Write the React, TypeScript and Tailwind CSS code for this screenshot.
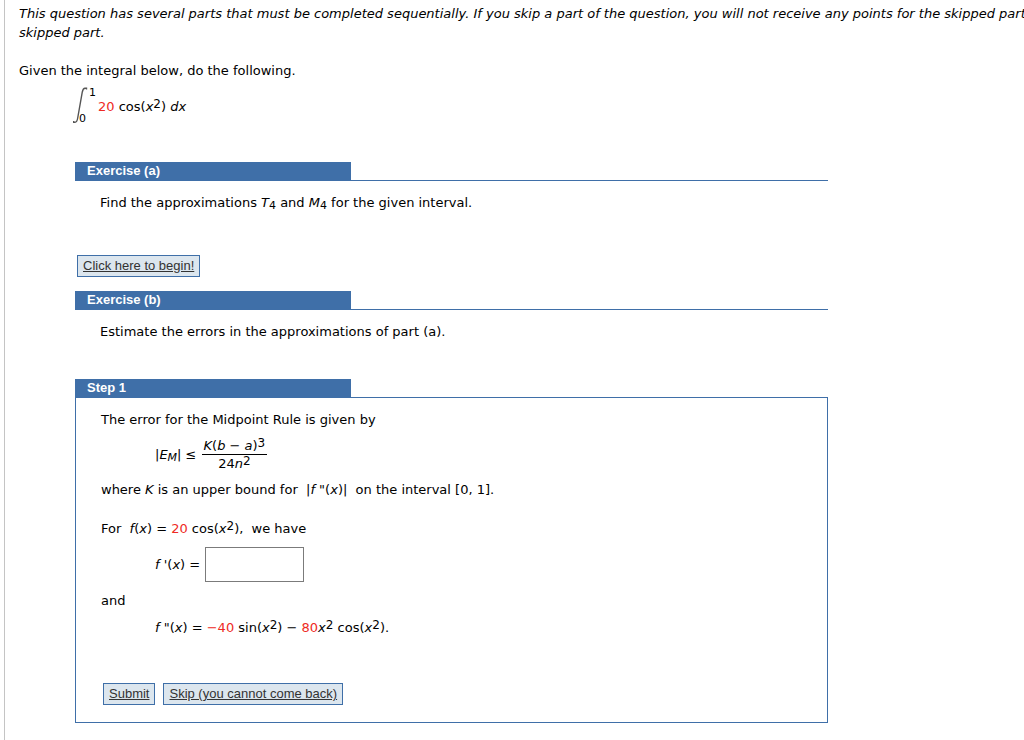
import type { ReactNode } from "react";

function SectionTitle({ children }: { children: ReactNode }) {
    return (
        <div className="border-b border-[#3f6fa8]">
            <h2 className="w-[276px] max-w-full h-[18px] pl-3 bg-[#3f6fa8] text-white font-['Liberation_Sans',sans-serif] font-bold text-[13px] leading-[18px]">{children}</h2>
        </div>
    )
}

function ActionButton({ children }: { children: ReactNode }) {
    return (
        <button type="button" className="h-[22px] px-[5px] border border-[#3f6fa8] bg-[#dce6ee] text-[#333] font-['Liberation_Sans',sans-serif] text-[13px] leading-5 underline cursor-pointer">{children}</button>
    )
}

function Sup({ children }: { children: ReactNode }) {
    return <sup className="text-[12px] leading-none align-[3px] top-0">{children}</sup>
}

function Sub({ children }: { children: ReactNode }) {
    return <sub className="text-[11px] leading-none align-[-2px] bottom-0">{children}</sub>
}

function Red({ children }: { children: ReactNode }) {
    return <span className="text-[#ee2a24]">{children}</span>
}

function Integral() {
    return (
        <div className="flex items-center pl-[54px] mt-[7px] h-[38px]">
            <svg width="16" height="38" viewBox="0 0 16 38" fill="none" stroke="#555" aria-hidden="true">
                <path d="M13.500 2.500V1.200H12C10.200 1.200 9.800 2.500 9.300 5L4.700 31C4.200 34 3.600 35.300 2 35.300H0.500V34" strokeWidth="1.400" />
            </svg>
            <div className="flex flex-col justify-between h-[38px] w-[9px] text-[11px] leading-3">
                <span>1</span>
                <span className="-ml-2.5">0</span>
            </div>
            <p><Red>20</Red> cos(<i>x</i><Sup>2</Sup>) <i>dx</i></p>
        </div>
    )
}

export default function App() {
    return (
        <div className="min-h-screen ml-1 pl-3.5 pt-1 overflow-hidden border-l border-[#c4c4c4] bg-white text-black font-['DejaVu_Sans',sans-serif] text-[13px] leading-[19px]">
            <p className="italic whitespace-nowrap">
                This question has several parts that must be completed sequentially. If you skip a part of the question, you will not receive any points for the skipped part, and<br />
                skipped part.
            </p>
            <p className="mt-[19px]">Given the integral below, do the following.</p>
            <Integral />

            <main className="max-w-[809px] pl-14 mt-[37px]">
                <section>
                    <SectionTitle>Exercise (a)</SectionTitle>
                    <p className="pl-[25px] pt-3">Find the approximations <i>T</i><Sub>4</Sub> and <i>M</i><Sub>4</Sub> for the given interval.</p>
                    <div className="flex pl-0.5 mt-[43px]">
                        <ActionButton>Click here to begin!</ActionButton>
                    </div>
                </section>

                <section className="mt-3.5">
                    <SectionTitle>Exercise (b)</SectionTitle>
                    <p className="pl-[25px] pt-3">Estimate the errors in the approximations of part (a).</p>
                </section>

                <section className="mt-[38px]">
                    <SectionTitle>Step 1</SectionTitle>
                    <form className="border border-t-0 border-[#3f6fa8] pl-[25px] pt-3 pb-[17px]">
                        <p>The error for the Midpoint Rule is given by</p>
                        <div className="flex items-center gap-[5px] pl-[54px] mt-2 h-9">
                            <span className="pb-0.5">|<i>E</i><Sub><i>M</i></Sub>| ≤</span>
                            <span className="flex flex-col items-center">
                                <span className="border-b border-black px-0.5 leading-[17px]"><i>K</i>(<i>b</i> − <i>a</i>)<Sup>3</Sup></span>
                                <span className="leading-[18px]">24<i>n</i><Sup>2</Sup></span>
                            </span>
                        </div>
                        <p className="mt-[7px]">where <i>K</i> is an upper bound for &nbsp;|<i>f "</i>(<i>x</i>)|&nbsp; on the interval [0, 1].</p>
                        <p className="mt-5">For &nbsp;<i>f</i>(<i>x</i>) = <Red>20</Red> cos(<i>x</i><Sup>2</Sup>), &nbsp;we have</p>
                        <div className="flex items-center gap-[5px] pl-[54px] mt-[9px]">
                            <label htmlFor="derivative"><i>f '</i>(<i>x</i>) =</label>
                            <input id="derivative" type="text" className="w-[99px] h-[35px] px-2 border border-[#7b7b7b] bg-white" />
                        </div>
                        <p className="mt-[9px]">and</p>
                        <p className="pl-[54px] mt-2"><i>f "</i>(<i>x</i>) = <Red>−40</Red> sin(<i>x</i><Sup>2</Sup>) − <Red>80</Red><i>x</i><Sup>2</Sup> cos(<i>x</i><Sup>2</Sup>).</p>
                        <div className="flex gap-2 pl-0.5 mt-[46px]">
                            <ActionButton>Submit</ActionButton>
                            <ActionButton>Skip (you cannot come back)</ActionButton>
                        </div>
                    </form>
                </section>
            </main>
        </div>
    )
}
